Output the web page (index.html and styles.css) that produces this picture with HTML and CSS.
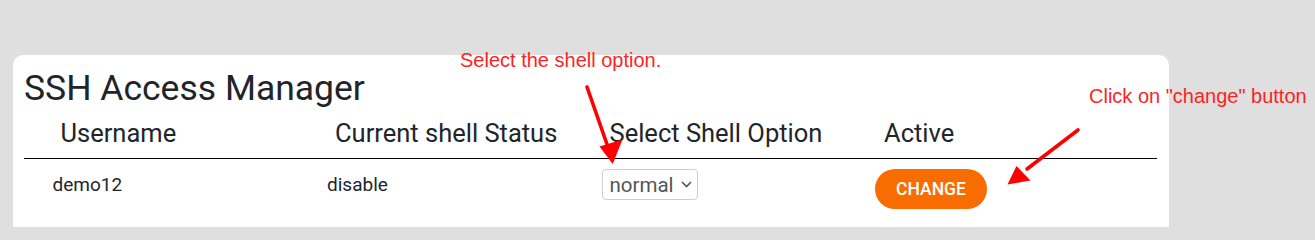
FILE: index.html
```html
<!DOCTYPE html>
<html lang="en">
<head>
<meta charset="utf-8">
<title>SSH Access Manager</title>
<link rel="stylesheet" href="styles.css">
</head>
<body>
<div class="card">
  <h2 class="title">SSH Access Manager</h2>
  <div class="table">
    <div class="row head">
      <div class="th">Username</div>
      <div class="th">Current shell Status</div>
      <div class="th">Select Shell Option</div>
      <div class="th">Active</div>
    </div>
    <div class="row body">
      <div class="td text">demo12</div>
      <div class="td text">disable</div>
      <div class="td">
        <div class="select-wrap">
          <select class="shell-select">
            <option>normal</option>
            <option>disable</option>
          </select>
          <svg class="chev" width="11" height="7" viewBox="0 0 11 7"><path d="M1 1 L5.5 5.5 L10 1" fill="none" stroke="#555" stroke-width="1.6"/></svg>
        </div>
      </div>
      <div class="td last"><button class="btn-change">Change</button></div>
    </div>
  </div>
</div>

<div class="note note-select">Select the shell option.</div>
<div class="note note-change">Click on "change" button</div>

<svg class="arrows" width="1315" height="227" viewBox="0 0 1315 227">
  <line x1="587" y1="87" x2="609" y2="150" stroke="#f00" stroke-width="3.6" stroke-linecap="round"/>
  <polygon points="612.7,164 599.5,146.5 622.5,139.5" fill="#f00"/>
  <line x1="1078" y1="130" x2="1027" y2="169" stroke="#f00" stroke-width="3.6" stroke-linecap="round"/>
  <polygon points="1007.5,184.5 1016.5,166 1030.5,180.5" fill="#f00"/>
</svg>
</body>
</html>
```
FILE: styles.css
```css
html, body {
  margin: 0;
  padding: 0;
}
html {
  background: #dfdfdf;
}
body {
  padding: 55px 0 0 13px;
  font-family: Roboto, "Noto Sans", sans-serif;
  color: #212529;
  position: relative;
}
.card {
  width: 1156px;
  box-sizing: border-box;
  background: #fff;
  border-radius: 10px 10px 0 0;
  padding: 12px 12px 18px 11px;
}
.title {
  margin: 0;
  font-weight: 400;
  font-size: 35.5px;
  line-height: 42px;
  color: #212529;
}
.table {
  margin-top: 9px;
}
.row {
  display: grid;
  grid-template-columns: 274.5px 274.5px 274.5px 1fr;
}
.head {
  border-bottom: 1px solid #000;
  padding-bottom: 10px;
}
.th {
  padding-left: 36.5px;
  font-size: 25.5px;
  line-height: 30px;
  white-space: nowrap;
}
.body {
  padding-top: 10px;
  align-items: start;
}
.td {
  padding-left: 28.5px;
  font-size: 19px;
  line-height: 23px;
}
.td.text {
  margin-top: 4px;
}
.td.last {
  padding-left: 27.5px;
}
.select-wrap {
  position: relative;
  display: inline-block;
}
.shell-select {
  appearance: none;
  -webkit-appearance: none;
  width: 96px;
  height: 31px;
  box-sizing: border-box;
  border: 1px solid #cfcfcf;
  border-radius: 4px;
  background: #fff;
  padding: 0 0 0 7px;
  font-family: Roboto, sans-serif;
  font-size: 20.5px;
  color: #555;
  display: block;
}
.chev {
  position: absolute;
  right: 6px;
  top: 12px;
}
.btn-change {
  width: 112px;
  height: 40px;
  border: none;
  border-radius: 20px;
  background: #f96c00;
  color: #fff;
  font-family: Roboto, sans-serif;
  font-weight: 500;
  font-size: 17.5px;
  text-transform: uppercase;
  padding: 0;
}
.note {
  position: absolute;
  font-family: "Liberation Sans", Arial, sans-serif;
  font-size: 20px;
  line-height: 23px;
  color: #ff1f1f;
  white-space: nowrap;
}
.note-select {
  left: 460px;
  top: 49px;
}
.note-change {
  left: 1089px;
  top: 85px;
}
.arrows {
  position: absolute;
  left: 0;
  top: 0;
  pointer-events: none;
}
```
